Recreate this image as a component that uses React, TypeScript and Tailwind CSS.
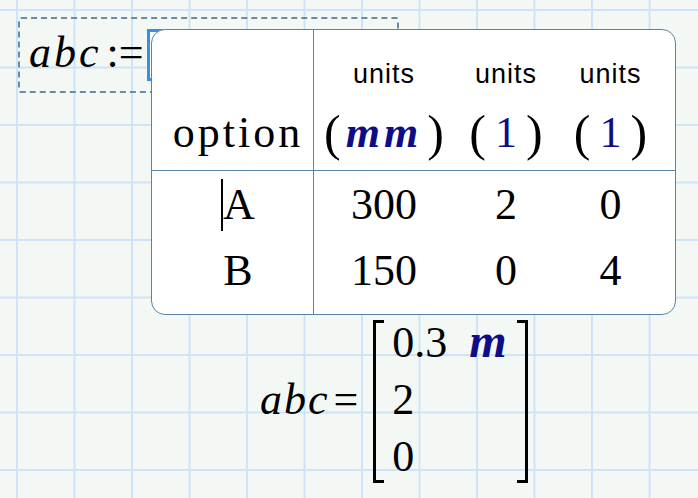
export default function App() {
  return (
    <div className="relative w-[698px] h-[498px] overflow-hidden bg-[#f4f8f5] bg-[linear-gradient(to_right,#cde4f8_2px,transparent_2px),linear-gradient(to_bottom,#cde4f8_2px,transparent_2px)] bg-size-[57.5px_57.5px] bg-position-[16px_9px] font-['Liberation_Serif',serif] text-black">
      {/* Definition region */}
      <div className="absolute left-[18px] top-[17px] w-[381px] h-[76px] rounded-[3px] border-2 border-dashed border-[#6a8aa5]">
        <div className="flex items-center h-full pl-[9px]">
          <span className="italic text-[44px] leading-none tracking-[3px] mb-[5px]">abc</span>
          <span className="text-[44px] leading-none ml-[5px] mb-[5px]">:=</span>
          <div className="ml-[3px] w-[60px] h-[52px] border-[3px] border-[#3a8ee8] bg-white" />
        </div>
      </div>

      {/* Table editor popup */}
      <div className="absolute left-[151px] top-[29px] w-[525px] h-[286px] rounded-[14px] border border-[#5a84a6] bg-white overflow-hidden">
        <div className="grid h-full grid-cols-[162px_140px_104px_1fr] grid-rows-[141px_67px_1fr]">
          {/* Header */}
          <div className="border-r border-b border-[#5a84a6] flex flex-col items-center pl-[11px] pt-[81px]">
            <span className="text-[44px] leading-[44px] tracking-[3px]">option</span>
          </div>
          <div className="border-b border-[#5a84a6] flex flex-col items-center pt-[31px]">
            <span className="font-['Liberation_Sans',Arial,sans-serif] text-[27px] leading-[27px] tracking-[1px]">units</span>
            <div className="mt-[23px] flex items-center gap-[5px] leading-[44px]">
              <span className="text-[50px]">(</span>
              <span className="text-[44px] italic font-bold text-[#0d0d8a] tracking-[4px]">mm</span>
              <span className="text-[50px]">)</span>
            </div>
          </div>
          <div className="border-b border-[#5a84a6] flex flex-col items-center pt-[31px]">
            <span className="font-['Liberation_Sans',Arial,sans-serif] text-[27px] leading-[27px] tracking-[1px]">units</span>
            <div className="mt-[23px] flex items-center gap-[9px] leading-[44px]">
              <span className="text-[50px]">(</span>
              <span className="text-[44px] text-[#0d0d8a]">1</span>
              <span className="text-[50px]">)</span>
            </div>
          </div>
          <div className="border-b border-[#5a84a6] flex flex-col items-center pt-[31px] pr-[12px]">
            <span className="font-['Liberation_Sans',Arial,sans-serif] text-[27px] leading-[27px] tracking-[1px]">units</span>
            <div className="mt-[23px] flex items-center gap-[9px] leading-[44px]">
              <span className="text-[50px]">(</span>
              <span className="text-[44px] text-[#0d0d8a]">1</span>
              <span className="text-[50px]">)</span>
            </div>
          </div>

          {/* Row A */}
          <div className="border-r border-[#5a84a6] flex items-center justify-center pl-[11px] text-[44px] leading-[44px]">
            <span className="w-[2px] h-[52px] bg-black" />
            <span>A</span>
          </div>
          <div className="flex items-center justify-center text-[44px] leading-[44px]">300</div>
          <div className="flex items-center justify-center text-[44px] leading-[44px]">2</div>
          <div className="flex items-center justify-center pr-[12px] text-[44px] leading-[44px]">0</div>

          {/* Row B */}
          <div className="border-r border-[#5a84a6] flex items-start justify-center pl-[11px] pt-[11px] text-[44px] leading-[44px]">B</div>
          <div className="flex items-start justify-center pt-[11px] text-[44px] leading-[44px]">150</div>
          <div className="flex items-start justify-center pt-[11px] text-[44px] leading-[44px]">0</div>
          <div className="flex items-start justify-center pt-[11px] pr-[12px] text-[44px] leading-[44px]">4</div>
        </div>
      </div>

      {/* Evaluation region */}
      <div className="absolute left-[260px] top-[314px] flex items-center">
        <span className="italic text-[44px] leading-none tracking-[2px]">abc</span>
        <span className="text-[44px] leading-none ml-[4px]">=</span>
        <div className="self-start mt-[6px] ml-[15px] w-[11px] h-[163px] border-l-[3px] border-y-[3px] border-black" />
        <div className="w-[133px] pl-[8px] flex flex-col text-[44px] leading-[57px]">
          <div className="flex items-baseline h-[57px]">
            <span>0.3</span>
            <span className="ml-[22px] text-[48px] leading-[54px] italic font-bold text-[#0d0d8a]">m</span>
          </div>
          <span>2</span>
          <span>0</span>
        </div>
        <div className="self-start mt-[6px] w-[11px] h-[163px] border-r-[3px] border-y-[3px] border-black" />
      </div>
    </div>
  )
}
